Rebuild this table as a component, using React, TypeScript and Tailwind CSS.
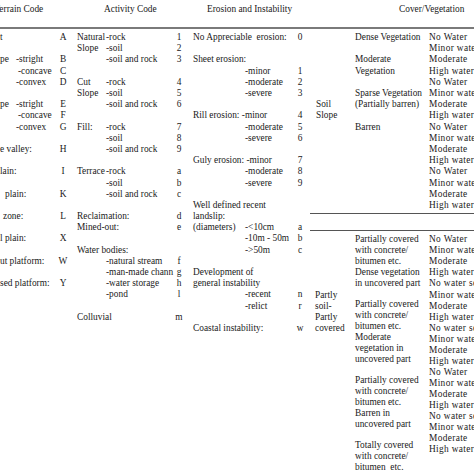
type Row = { t?: string; a?: string; b?: string; n?: string; pad?: string }

const terrain: Row[] = [
  { t: "t", n: "A" },
  {},
  { a: "pe", b: "-stright", n: "B" },
  { b: "-concave", n: "C", pad: "pl-[2px]" },
  { b: "-convex", n: "D" },
  {},
  { a: "pe", b: "-stright", n: "E" },
  { b: "-concave", n: "F", pad: "pl-[2px]" },
  { b: "-convex", n: "G" },
  {},
  { t: "e valley:", n: "H" },
  {},
  { t: "lain:", n: "I" },
  {},
  { t: "plain:", n: "K", pad: "pl-[5px]" },
  {},
  { t: "zone:", n: "L", pad: "pl-[3px]" },
  {},
  { t: "l plain:", n: "X" },
  {},
  { t: "ut platform:", n: "W" },
  {},
  { t: "sed platform:", n: "Y" },
]

const activity: Row[] = [
  { a: "Natural", b: "-rock", n: "1" },
  { a: "Slope", b: "-soil", n: "2" },
  { b: "-soil and rock", n: "3" },
  {},
  { a: "Cut", b: "-rock", n: "4" },
  { a: "Slope", b: "-soil", n: "5" },
  { b: "-soil and rock", n: "6" },
  {},
  { a: "Fill:", b: "-rock", n: "7" },
  { b: "-soil", n: "8" },
  { b: "-soil and rock", n: "9" },
  {},
  { a: "Terrace", b: "-rock", n: "a" },
  { b: "-soil", n: "b" },
  { b: "-soil and rock", n: "c" },
  {},
  { t: "Reclaimation:", n: "d" },
  { t: "Mined-out:", n: "e" },
  {},
  { t: "Water bodies:" },
  { b: "-natural stream", n: "f" },
  { b: "-man-made chann", n: "g" },
  { b: "-water storage", n: "h" },
  { b: "-pond", n: "l" },
  {},
  { t: "Colluvial", n: "m" },
]

const erosion: Row[] = [
  { t: "No Appreciable\u00a0 erosion:", n: "0" },
  {},
  { t: "Sheet erosion:" },
  { b: "-minor", n: "1" },
  { b: "-moderate", n: "2" },
  { b: "-severe", n: "3" },
  {},
  { t: "Rill erosion: -minor", n: "4" },
  { b: "-moderate", n: "5" },
  { b: "-severe", n: "6" },
  {},
  { t: "Guly erosion: -minor", n: "7" },
  { b: "-moderate", n: "8" },
  { b: "-severe", n: "9" },
  {},
  { t: "Well defined recent" },
  { t: "landslip:" },
  { a: "(diameters)", b: "-<10cm", n: "a" },
  { b: "-10m - 50m", n: "b" },
  { b: "->50m", n: "c" },
  {},
  { t: "Development of" },
  { t: "general instability" },
  { b: "-recent", n: "n" },
  { b: "-relict", n: "r" },
  {},
  { t: "Coastal instability:", n: "w" },
]

const water = ["No Water", "Minor water", "Moderate", "High water"]

const cover1: { s?: string; v?: string }[] = [
  { v: "Dense Vegetation" },
  {},
  { v: "Moderate" },
  { v: "Vegetation" },
  {},
  { v: "Sparse Vegetation" },
  { s: "Soil", v: "(Partially barren)" },
  { s: "Slope" },
  { v: "Barren" },
  {}, {}, {}, {}, {}, {}, {},
]

const water2 = [
  "No Water", "Minor water", "Moderate", "High water",
  "No water seepage", "Minor water", "Moderate", "High water",
  "No water seepage", "Minor water", "Moderate", "High water",
  "No Water", "Minor water", "Moderate", "High water",
  "No water seepage", "Minor water", "Moderate", "High water",
]

const groups = [
  ["Partially covered", "with concrete/", "bitumen etc.", "Dense vegetation", "in uncovered part"],
  ["Partially covered", "with concrete/", "bitumen etc.", "Moderate", "vegetation in", "uncovered part"],
  ["Partially covered", "with concrete/", "bitumen etc.", "Barren in", "uncovered part"],
  ["Totally covered", "with concrete/", "bitumen\u00a0 etc."],
]

function CodeColumn({ rows, outer, label, sub, num }: { rows: Row[]; outer: string; label: string; sub: string; num: string }) {
  return (
    <div className={outer}>
      {rows.map((r, i) => (
        <div key={i} className="flex h-[11.2px] leading-[11.2px] whitespace-nowrap">
          <div className={`${label} flex shrink-0 ${r.pad ?? ""}`}>
            {r.t ? (
              <span>{r.t}</span>
            ) : (
              <>
                <span className={`${sub} shrink-0`}>{r.a}</span>
                <span>{r.b}</span>
              </>
            )}
          </div>
          <div className={`${num} shrink-0 text-center`}>{r.n}</div>
        </div>
      ))}
    </div>
  )
}

export default function App() {
  return (
    <div className="w-[474px] h-[474px] overflow-hidden bg-white text-[#1a1a1a] font-['Liberation_Serif',serif] text-[9.35px]">
      {/* header */}
      <div className="flex h-[29px] border-b-2 border-[#7a7a7a] pt-[3.7px] leading-[11.2px] whitespace-nowrap">
        <div className="-ml-[5.7px] w-[109.7px] shrink-0">Terrain Code</div>
        <div className="w-[103px] shrink-0">Activity Code</div>
        <div className="w-[192px] shrink-0">Erosion and Instability</div>
        <div className="shrink-0">Cover/Vegetation</div>
      </div>

      <div className="flex pt-[3.1px]">
        <CodeColumn rows={terrain} outer="w-[70px] shrink-0" label="w-[56px]" sub="w-[16px]" num="w-[14px]" />
        <CodeColumn rows={activity} outer="w-[116px] shrink-0 pl-[7px]" label="w-[95px]" sub="w-[29px]" num="w-[14px]" />
        <CodeColumn rows={erosion} outer="w-[120px] shrink-0 pl-[7px]" label="w-[101px]" sub="w-[52px]" num="w-[12px]" />

        {/* cover / vegetation */}
        <div className="flex min-w-0 flex-1 flex-col whitespace-nowrap">
          {cover1.map((r, i) => (
            <div key={i} className="flex h-[11.2px] leading-[11.2px]">
              <div className="w-[49px] shrink-0 pl-[10px]">{r.s}</div>
              <div className="w-[74px] shrink-0">{r.v}</div>
              <div className="tracking-[0.35px]">{water[i % 4]}</div>
            </div>
          ))}
          <div className="ml-[4px] mt-[1.6px] h-[1.5px] bg-[#555]" />
          <div className="ml-[4px] mt-[15.5px] h-[1.5px] bg-[#555]" />

          <div className="mt-[3.1px] flex">
            <div className="w-[49px] shrink-0 pl-[9px] pt-[55.8px] leading-[11px]">
              <div>Partly</div>
              <div>soil-</div>
              <div>Partly</div>
              <div>covered</div>
            </div>
            <div className="flex w-[74px] shrink-0 flex-col gap-[9.5px]">
              {groups.map((g, gi) => (
                <div key={gi}>
                  {g.map((line, li) => (
                    <div key={li} className="h-[11.05px] leading-[11.05px]">{line}</div>
                  ))}
                </div>
              ))}
            </div>
            <div className="tracking-[0.35px]">
              {water2.map((w, i) => (
                <div key={i} className="h-[11.05px] leading-[11.05px]">{w}</div>
              ))}
            </div>
          </div>
        </div>
      </div>
    </div>
  )
}
